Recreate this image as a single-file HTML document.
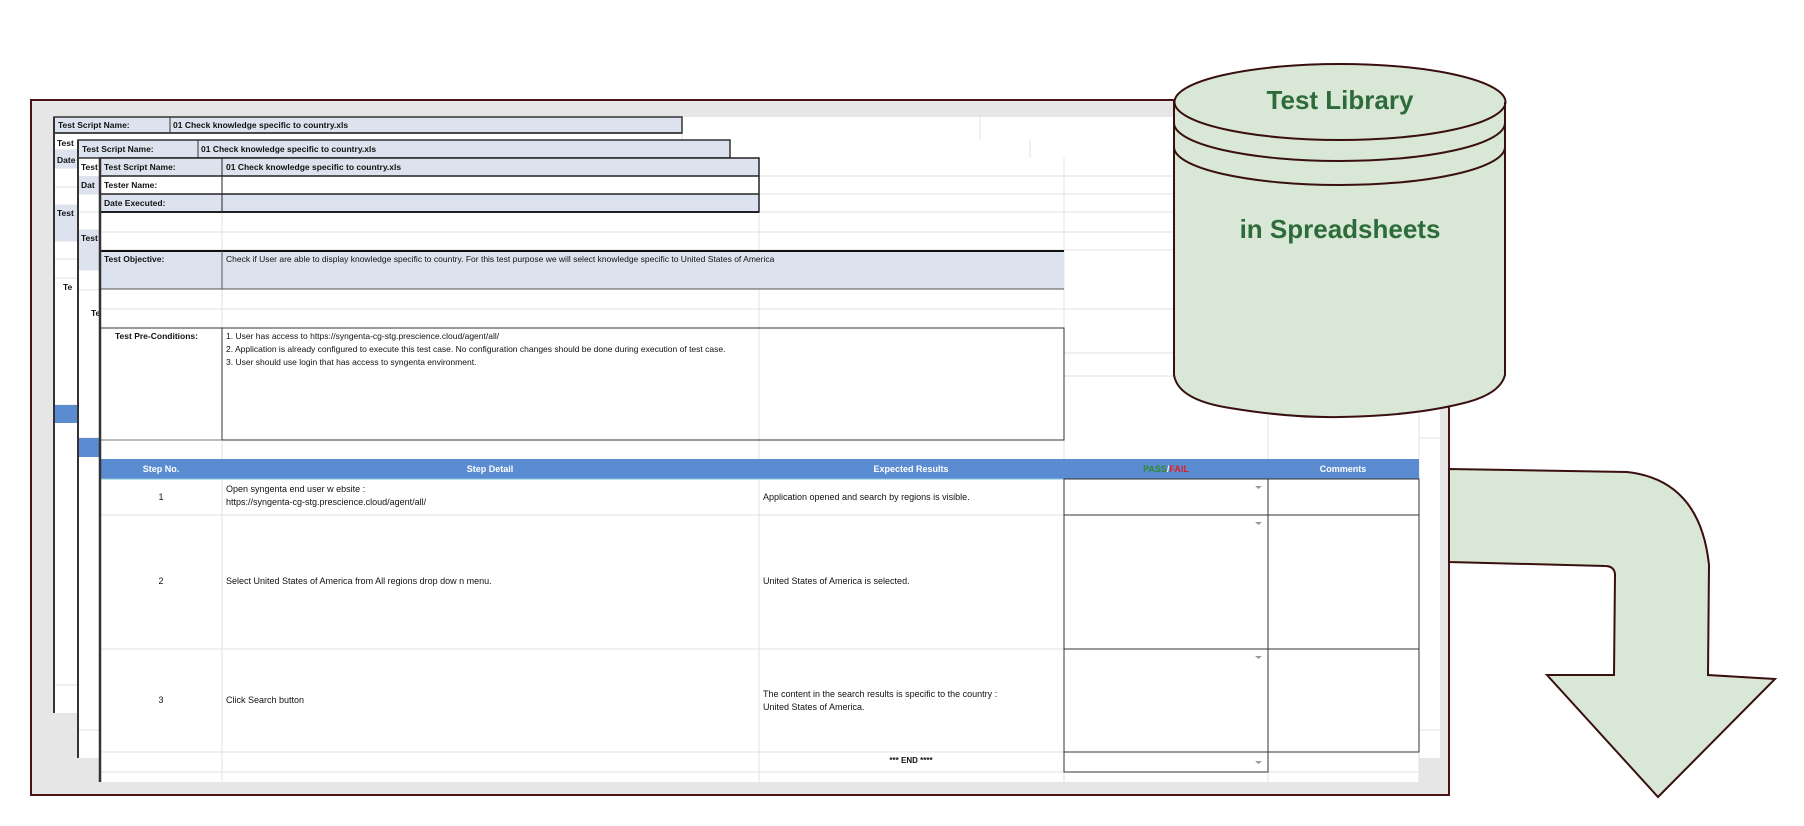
<!DOCTYPE html>
<html><head><meta charset="utf-8"><style>
html,body{margin:0;padding:0;background:#fff;width:1804px;height:826px;overflow:hidden}
svg{display:block}
.l{font-family:"Liberation Sans",sans-serif;font-size:8.5px;fill:#111}
.b{font-weight:bold}
.h{font-family:"Liberation Sans",sans-serif;font-size:9px;font-weight:bold;fill:#fff}
.a{font-family:"Liberation Sans",sans-serif;font-size:9px;fill:#111}
.g{stroke:#e2e2e2;stroke-width:1}
</style></head><body>
<svg width="1804" height="826" viewBox="0 0 1804 826" xmlns="http://www.w3.org/2000/svg">
<rect x="31" y="100" width="1418" height="695" fill="#e6e6e6" stroke="#4a1414" stroke-width="2"/>

<rect x="54" y="117" width="1386" height="596" fill="#fff"/>
<g class="g">
<line x1="54" y1="150" x2="1440" y2="150"/><line x1="54" y1="168" x2="1440" y2="168"/>
<line x1="54" y1="187" x2="1440" y2="187"/><line x1="54" y1="205" x2="1440" y2="205"/>
<line x1="54" y1="241" x2="1440" y2="241"/><line x1="54" y1="259" x2="1440" y2="259"/>
<line x1="54" y1="278" x2="1440" y2="278"/><line x1="54" y1="405" x2="1440" y2="405"/>
<line x1="54" y1="685" x2="1440" y2="685"/>
<line x1="682" y1="117" x2="682" y2="713"/><line x1="980" y1="117" x2="980" y2="713"/>
</g>
<rect x="54" y="117" width="116" height="16" fill="#dce3ee"/>
<rect x="170" y="117" width="512" height="16" fill="#dce3ee"/>
<rect x="54" y="150" width="24" height="18" fill="#dce3ee"/>
<rect x="54" y="205" width="24" height="36" fill="#dce3ee"/>
<rect x="54" y="405" width="24" height="18" fill="#5b8bd0"/>
<rect x="54" y="117" width="628" height="16" fill="none" stroke="#333" stroke-width="1.5"/>
<line x1="170" y1="117" x2="170" y2="133" stroke="#333"/>
<line x1="54" y1="133" x2="682" y2="133" stroke="#333" stroke-width="1.5"/>
<line x1="54" y1="117" x2="54" y2="713" stroke="#333" stroke-width="2"/>
<text class="l b" x="58" y="128">Test Script Name:</text>
<text class="l b" x="173" y="128">01 Check knowledge specific to country.xls</text>
<text class="l b" x="57" y="146">Test</text>
<text class="l b" x="57" y="163">Date</text>
<text class="l b" x="57" y="216">Test</text>
<text class="l b" x="63" y="290">Te</text>

<rect x="78" y="140" width="1362" height="618" fill="#fff"/>
<g class="g">
<line x1="78" y1="194" x2="1440" y2="194"/><line x1="78" y1="212" x2="1440" y2="212"/>
<line x1="78" y1="230" x2="1440" y2="230"/><line x1="78" y1="270" x2="1440" y2="270"/>
<line x1="78" y1="290" x2="1440" y2="290"/><line x1="78" y1="438" x2="1440" y2="438"/>
<line x1="78" y1="730" x2="1440" y2="730"/>
<line x1="1030" y1="140" x2="1030" y2="158"/>
</g>
<rect x="78" y="140" width="652" height="18" fill="#dce3ee"/>
<rect x="78" y="176" width="22" height="18" fill="#dce3ee"/>
<rect x="78" y="230" width="22" height="40" fill="#dce3ee"/>
<rect x="78" y="438" width="22" height="19" fill="#5b8bd0"/>
<rect x="78" y="140" width="652" height="18" fill="none" stroke="#333" stroke-width="1.5"/>
<line x1="198" y1="140" x2="198" y2="158" stroke="#333"/>
<line x1="78" y1="140" x2="78" y2="758" stroke="#333" stroke-width="2"/>
<text class="l b" x="82" y="152">Test Script Name:</text>
<text class="l b" x="201" y="152">01 Check knowledge specific to country.xls</text>
<text class="l b" x="81" y="170">Test</text>
<text class="l b" x="81" y="188">Dat</text>
<text class="l b" x="81" y="241">Test</text>
<text class="l b" x="91" y="316">Te</text>

<rect x="100" y="158" width="1319" height="624" fill="#fff"/>
<g class="g">
<line x1="100" y1="232" x2="1419" y2="232"/><line x1="100" y1="250" x2="1419" y2="250"/>
<line x1="100" y1="309" x2="1419" y2="309"/><line x1="100" y1="212" x2="1419" y2="212"/>
<line x1="1064" y1="353" x2="1419" y2="353"/><line x1="1064" y1="376" x2="1419" y2="376"/>
<line x1="100" y1="772" x2="1419" y2="772"/>
<line x1="222" y1="212" x2="222" y2="782"/><line x1="759" y1="158" x2="759" y2="782"/>
<line x1="1064" y1="158" x2="1064" y2="782"/><line x1="1268" y1="158" x2="1268" y2="782"/>
<line x1="1419" y1="158" x2="1419" y2="782"/>
<line x1="759" y1="176" x2="1419" y2="176"/><line x1="759" y1="194" x2="1419" y2="194"/>
<line x1="100" y1="515" x2="1064" y2="515"/><line x1="100" y1="649" x2="1064" y2="649"/>
<line x1="100" y1="752" x2="1064" y2="752"/>
</g>
<rect x="100" y="158" width="659" height="18" fill="#dce3ee"/>
<rect x="100" y="194" width="659" height="18" fill="#dce3ee"/>
<rect x="100" y="158" width="659" height="54" fill="none" stroke="#222" stroke-width="1.5"/>
<line x1="100" y1="176" x2="759" y2="176" stroke="#222" stroke-width="1.5"/>
<line x1="100" y1="194" x2="759" y2="194" stroke="#222" stroke-width="1.5"/>
<line x1="100" y1="212" x2="759" y2="212" stroke="#222" stroke-width="2"/>
<line x1="222" y1="158" x2="222" y2="212" stroke="#222"/>
<text class="l b" x="104" y="170">Test Script Name:</text>
<text class="l b" x="226" y="170">01 Check knowledge specific to country.xls</text>
<text class="l b" x="104" y="188">Tester Name:</text>
<text class="l b" x="104" y="206">Date Executed:</text>

<rect x="100" y="251" width="964" height="38" fill="#dce3ee"/>
<line x1="100" y1="251" x2="1064" y2="251" stroke="#111" stroke-width="2"/>
<line x1="100" y1="289" x2="1064" y2="289" stroke="#555"/>
<line x1="222" y1="251" x2="222" y2="289" stroke="#555"/>
<text class="l b" x="104" y="262">Test Objective:</text>
<text class="l" x="226" y="262">Check if User are able to display knowledge specific to country. For this test purpose we will select knowledge specific to United States of America</text>

<line x1="100" y1="328" x2="222" y2="328" stroke="#333"/>
<rect x="222" y="328" width="842" height="112" fill="none" stroke="#333"/>
<line x1="100" y1="440" x2="222" y2="440" stroke="#777"/>
<text class="l b" x="115" y="339">Test Pre-Conditions:</text>
<text class="l" x="226" y="339">1. User has access to https://syngenta-cg-stg.prescience.cloud/agent/all/</text>
<text class="l" x="226" y="352">2. Application is already configured to execute this test case. No configuration changes should be done during execution of test case.</text>
<text class="l" x="226" y="365">3. User should use login that has access to  syngenta environment.</text>

<rect x="100" y="459" width="1319" height="20" fill="#5b8bd0"/>
<line x1="100" y1="479" x2="1064" y2="479" stroke="#7fc3d8"/>
<text class="h" x="161" y="472" text-anchor="middle">Step No.</text>
<text class="h" x="490" y="472" text-anchor="middle">Step Detail</text>
<text class="h" x="911" y="472" text-anchor="middle">Expected Results</text>
<text class="h" x="1166" y="472" text-anchor="middle"><tspan fill="#2e8b2e">PASS</tspan><tspan fill="#fff">/</tspan><tspan fill="#e02020">FAIL</tspan></text>
<text class="h" x="1343" y="472" text-anchor="middle">Comments</text>

<g fill="none" stroke="#333">
<rect x="1064" y="479" width="204" height="36"/><rect x="1268" y="479" width="151" height="36"/>
<rect x="1064" y="515" width="204" height="134"/><rect x="1268" y="515" width="151" height="134"/>
<rect x="1064" y="649" width="204" height="103"/><rect x="1268" y="649" width="151" height="103"/>
<rect x="1064" y="752" width="204" height="20"/>
</g>
<g fill="#999">
<path d="M1255 486h7l-3.5 3z"/><path d="M1255 522h7l-3.5 3z"/><path d="M1255 656h7l-3.5 3z"/><path d="M1255 761h7l-3.5 3z"/>
</g>
<line x1="100" y1="158" x2="100" y2="782" stroke="#333" stroke-width="2.5"/>

<text class="a" x="161" y="500" text-anchor="middle">1</text>
<text class="a" x="226" y="492">Open syngenta end user w ebsite :</text>
<text class="a" x="226" y="505">https://syngenta-cg-stg.prescience.cloud/agent/all/</text>
<text class="a" x="763" y="500">Application opened and search by regions is visible.</text>
<text class="a" x="161" y="584" text-anchor="middle">2</text>
<text class="a" x="226" y="584">Select United States of America from All regions drop dow n menu.</text>
<text class="a" x="763" y="584">United States of America is selected.</text>
<text class="a" x="161" y="703" text-anchor="middle">3</text>
<text class="a" x="226" y="703">Click Search button</text>
<text class="a" x="763" y="697">The content in the search results is specific to the country :</text>
<text class="a" x="763" y="710">United States of America.</text>
<text class="a b" x="911" y="763" text-anchor="middle" style="font-size:8px">*** END ****</text>

<path d="M1449 469 L1627 472 Q1700 480 1709 565 L1708 675 L1775 679 L1658 797 L1547 675 L1614 675 L1615 574 Q1614 566 1605 566 L1449 562 Z" fill="#d9e7d6" stroke="#3a0f0f" stroke-width="2"/>

<path d="M1174 102 L1174 375 Q1178 400 1230 408 Q1290 418 1340 417 Q1410 416 1460 404 Q1500 395 1505 375 L1505 102 Z" fill="#d9e7d6" stroke="#3a0f0f" stroke-width="2"/>
<ellipse cx="1340" cy="102" rx="165.5" ry="38" fill="#d9e7d6" stroke="#3a0f0f" stroke-width="2"/>
<path d="M1174 102 L1174 123 A165.5 38 0 0 0 1505 123 L1505 102" fill="none" stroke="#3a0f0f" stroke-width="2"/>
<path d="M1174 123 L1174 147 A165.5 38 0 0 0 1505 147 L1505 123" fill="none" stroke="#3a0f0f" stroke-width="2"/>
<text x="1340" y="109" text-anchor="middle" style="font-family:'Liberation Sans',sans-serif;font-weight:bold;font-size:26px;fill:#2e6b3a">Test Library</text>
<text x="1340" y="238" text-anchor="middle" style="font-family:'Liberation Sans',sans-serif;font-weight:bold;font-size:26px;fill:#2e6b3a">in Spreadsheets</text>
</svg>
</body></html>
